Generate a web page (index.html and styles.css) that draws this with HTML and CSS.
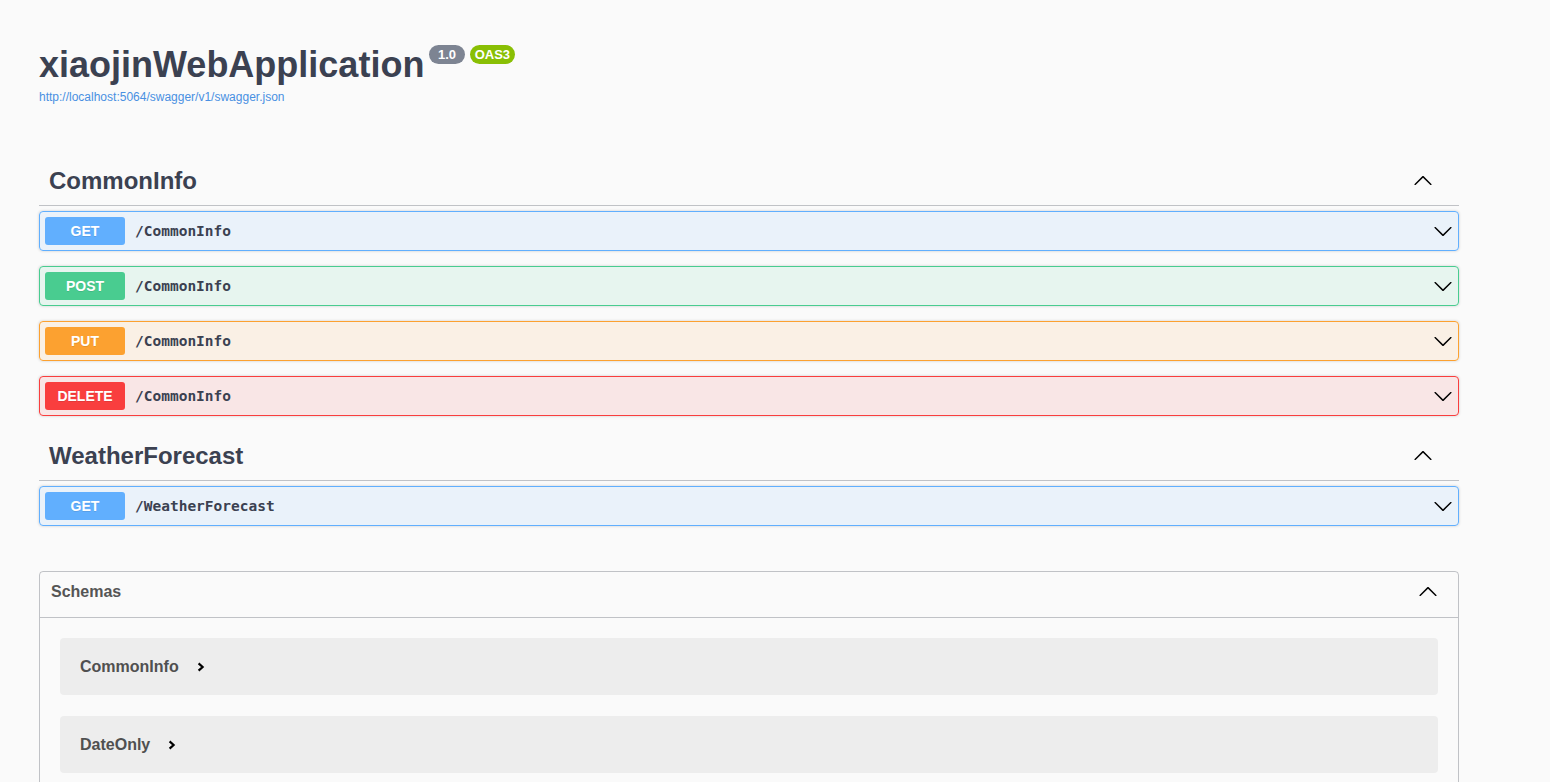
FILE: index.html
```html
<!DOCTYPE html>
<html lang="en">
<head>
<meta charset="utf-8">
<title>Swagger UI</title>
<link rel="stylesheet" href="styles.css">
</head>
<body>
<div class="wrapper">
  <div class="info">
    <div class="title-row">
      <h2 class="title">xiaojinWebApplication</h2>
      <span class="badge badge-version"> 1.0 </span>
      <span class="badge badge-oas">OAS3</span>
    </div>
    <a class="spec-link" href="#">http://localhost:5064/swagger/v1/swagger.json</a>
  </div>

  <section class="tag-section">
    <div class="tag-header">
      <h3 class="tag-title">CommonInfo</h3>
      <svg class="chev chev-up tag-chev" viewBox="0 0 20 20" width="20" height="20"><path d="M17.418 6.109c.272-.268.709-.268.979 0s.271.701 0 .969l-7.908 7.83c-.27.268-.707.268-.979 0l-7.908-7.830c-.27-.268-.27-.701 0-.969.271-.268.709-.268.979 0L10 13.25l7.418-7.141z"/></svg>
    </div>
    <div class="opblock get">
      <span class="method">GET</span>
      <span class="path">/CommonInfo</span>
      <svg class="chev" viewBox="0 0 20 20" width="20" height="20"><path d="M17.418 6.109c.272-.268.709-.268.979 0s.271.701 0 .969l-7.908 7.83c-.27.268-.707.268-.979 0l-7.908-7.83c-.27-.268-.27-.701 0-.969.271-.268.709-.268.979 0L10 13.25l7.418-7.141z"/></svg>
    </div>
    <div class="opblock post">
      <span class="method">POST</span>
      <span class="path">/CommonInfo</span>
      <svg class="chev" viewBox="0 0 20 20" width="20" height="20"><path d="M17.418 6.109c.272-.268.709-.268.979 0s.271.701 0 .969l-7.908 7.83c-.27.268-.707.268-.979 0l-7.908-7.83c-.27-.268-.27-.701 0-.969.271-.268.709-.268.979 0L10 13.25l7.418-7.141z"/></svg>
    </div>
    <div class="opblock put">
      <span class="method">PUT</span>
      <span class="path">/CommonInfo</span>
      <svg class="chev" viewBox="0 0 20 20" width="20" height="20"><path d="M17.418 6.109c.272-.268.709-.268.979 0s.271.701 0 .969l-7.908 7.83c-.27.268-.707.268-.979 0l-7.908-7.83c-.27-.268-.27-.701 0-.969.271-.268.709-.268.979 0L10 13.25l7.418-7.141z"/></svg>
    </div>
    <div class="opblock delete">
      <span class="method">DELETE</span>
      <span class="path">/CommonInfo</span>
      <svg class="chev" viewBox="0 0 20 20" width="20" height="20"><path d="M17.418 6.109c.272-.268.709-.268.979 0s.271.701 0 .969l-7.908 7.83c-.27.268-.707.268-.979 0l-7.908-7.83c-.27-.268-.27-.701 0-.969.271-.268.709-.268.979 0L10 13.25l7.418-7.141z"/></svg>
    </div>
  </section>

  <section class="tag-section">
    <div class="tag-header">
      <h3 class="tag-title">WeatherForecast</h3>
      <svg class="chev chev-up tag-chev" viewBox="0 0 20 20" width="20" height="20"><path d="M17.418 6.109c.272-.268.709-.268.979 0s.271.701 0 .969l-7.908 7.83c-.27.268-.707.268-.979 0l-7.908-7.83c-.27-.268-.27-.701 0-.969.271-.268.709-.268.979 0L10 13.25l7.418-7.141z"/></svg>
    </div>
    <div class="opblock get">
      <span class="method">GET</span>
      <span class="path">/WeatherForecast</span>
      <svg class="chev" viewBox="0 0 20 20" width="20" height="20"><path d="M17.418 6.109c.272-.268.709-.268.979 0s.271.701 0 .969l-7.908 7.83c-.27.268-.707.268-.979 0l-7.908-7.83c-.27-.268-.27-.701 0-.969.271-.268.709-.268.979 0L10 13.25l7.418-7.141z"/></svg>
    </div>
  </section>

  <section class="models">
    <div class="models-header">
      <h4 class="models-title">Schemas</h4>
      <svg class="chev chev-up" viewBox="0 0 20 20" width="20" height="20"><path d="M17.418 6.109c.272-.268.709-.268.979 0s.271.701 0 .969l-7.908 7.83c-.27.268-.707.268-.979 0l-7.908-7.83c-.27-.268-.27-.701 0-.969.271-.268.709-.268.979 0L10 13.25l7.418-7.141z"/></svg>
    </div>
    <div class="models-body">
      <div class="model-container">
        <span class="model-title">CommonInfo</span>
        <svg class="model-toggle" viewBox="0 0 8 10" width="8" height="10"><path d="M1.6 1.4 L5.6 5 L1.6 8.6" fill="none" stroke="#000" stroke-width="2.2"/></svg>
      </div>
      <div class="model-container">
        <span class="model-title">DateOnly</span>
        <svg class="model-toggle" viewBox="0 0 8 10" width="8" height="10"><path d="M1.6 1.4 L5.6 5 L1.6 8.6" fill="none" stroke="#000" stroke-width="2.2"/></svg>
      </div>
    </div>
  </section>
</div>
</body>
</html>
```

FILE: styles.css
```css
html, body {
  margin: 0;
  padding: 0;
  background: #fafafa;
  font-family: "Liberation Sans", Arial, sans-serif;
  color: #3b4151;
}

.wrapper {
  width: 1420px;
  margin-left: 39px;
  display: flex;
  flex-direction: column;
}

.info {
  padding-top: 44px;
  margin-bottom: 52px;
  display: flex;
  flex-direction: column;
}

.title-row {
  display: flex;
  align-items: flex-start;
}

.title {
  margin: 0;
  font-size: 36px;
  line-height: 41px;
  font-weight: 700;
  color: #3b4151;
}

.badge {
  margin-top: 1px;
  margin-left: 5px;
  padding: 2px 5px;
  border-radius: 57px;
  font-size: 13px;
  line-height: 15px;
  font-weight: 700;
  color: #fff;
  white-space: pre;
}

.badge-version {
  background: #7d8492;
}

.badge-oas {
  background: #89bf04;
  margin-left: 5px;
}

.spec-link {
  margin-top: 5px;
  font-size: 12px;
  line-height: 14px;
  color: #4990e2;
  text-decoration: none;
  align-self: flex-start;
}

.tag-section {
  display: flex;
  flex-direction: column;
}

.tag-header {
  display: flex;
  align-items: center;
  padding: 10px 26px 10px 10px;
  border-bottom: 1px solid rgba(59, 65, 81, 0.3);
  margin-bottom: 5px;
}

.tag-title {
  margin: 0;
  flex: 1;
  font-size: 24px;
  line-height: 29px;
  font-weight: 700;
  color: #3b4151;
}

.chev {
  display: block;
  flex: none;
  fill: #000;
}

.chev-up {
  transform: rotate(180deg);
}

.opblock {
  display: flex;
  align-items: center;
  height: 40px;
  box-sizing: border-box;
  padding: 0 5px;
  margin-bottom: 15px;
  border: 1px solid;
  border-radius: 4px;
  box-shadow: 0 0 3px rgba(0, 0, 0, 0.19);
}

.method {
  width: 80px;
  height: 28px;
  box-sizing: border-box;
  display: flex;
  align-items: center;
  justify-content: center;
  border-radius: 3px;
  font-size: 14px;
  font-weight: 700;
  color: #fff;
  text-shadow: 0 1px 0 rgba(0, 0, 0, 0.1);
}

.path {
  flex: 1;
  padding: 0 10px;
  font-family: "DejaVu Sans Mono", "Liberation Mono", monospace;
  font-size: 14.5px;
  font-weight: 700;
  color: #3b4151;
}

.get { background: rgba(97, 175, 254, 0.1); border-color: #61affe; }
.get .method { background: #61affe; }
.post { background: rgba(73, 204, 144, 0.1); border-color: #49cc90; }
.post .method { background: #49cc90; }
.put { background: rgba(252, 161, 48, 0.1); border-color: #fca130; }
.put .method { background: #fca130; }
.delete { background: rgba(249, 62, 62, 0.1); border-color: #f93e3e; }
.delete .method { background: #f93e3e; }

.models {
  margin-top: 30px;
  border: 1px solid rgba(59, 65, 81, 0.3);
  border-radius: 4px;
  height: 300px;
}

.models-header {
  display: flex;
  align-items: flex-start;
  padding: 10px 20px 15px 11px;
  border-bottom: 1px solid rgba(59, 65, 81, 0.3);
}

.models-title {
  margin: 0;
  flex: 1;
  font-size: 16px;
  line-height: 19px;
  font-weight: 700;
  color: #555;
}

.models-body {
  padding-top: 20px;
  display: flex;
  flex-direction: column;
  gap: 21px;
}

.model-container {
  margin: 0 20px;
  height: 57px;
  padding: 0 20px;
  display: flex;
  align-items: center;
  background: rgba(0, 0, 0, 0.05);
  border-radius: 4px;
}

.model-title {
  font-size: 16px;
  font-weight: 700;
  color: #505050;
}

.model-toggle {
  display: block;
  margin-left: 18px;
}
```
